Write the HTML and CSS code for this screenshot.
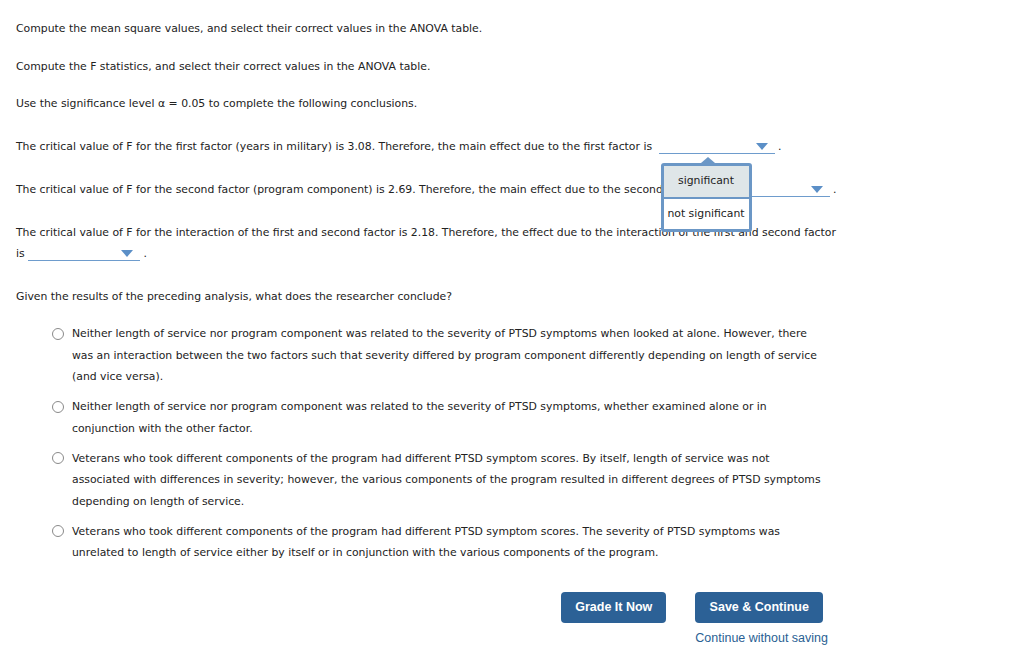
FILE: index.html
```html
<!DOCTYPE html>
<html>
<head>
<meta charset="utf-8">
<link rel="stylesheet" href="styles.css">
</head>
<body>
<div class="page">
  <p class="line first">Compute the mean square values, and select their correct values in the ANOVA table.</p>
  <p class="line g16">Compute the F statistics, and select their correct values in the ANOVA table.</p>
  <p class="line g16">Use the significance level α = 0.05 to complete the following conclusions.</p>
  <p class="line g22">The critical value of F for the first factor (years in military) is 3.08. Therefore, the main effect due to the first factor is <span class="dd w116 shift"><span class="arrow"></span><span class="menu"><span class="item sel">significant</span><span class="item">not significant</span></span></span> .</p>
  <p class="line g22">The critical value of F for the second factor (program component) is 2.69. Therefore, the main effect due to the second factor is <span class="dd w116"><span class="arrow"></span></span> .</p>
  <p class="line g22">The critical value of F for the interaction of the first and second factor is 2.18. Therefore, the effect due to the interaction of the first and second factor<br>is <span class="dd w112"><span class="arrow"></span></span> .</p>
  <p class="line g22">Given the results of the preceding analysis, what does the researcher conclude?</p>
  <div class="options">
    <label class="opt"><span class="radio"></span><span class="otext">Neither length of service nor program component was related to the severity of PTSD symptoms when looked at alone. However, there<br>was an interaction between the two factors such that severity differed by program component differently depending on length of service<br>(and vice versa).</span></label>
    <label class="opt"><span class="radio"></span><span class="otext">Neither length of service nor program component was related to the severity of PTSD symptoms, whether examined alone or in<br>conjunction with the other factor.</span></label>
    <label class="opt"><span class="radio"></span><span class="otext">Veterans who took different components of the program had different PTSD symptom scores. By itself, length of service was not<br>associated with differences in severity; however, the various components of the program resulted in different degrees of PTSD symptoms<br>depending on length of service.</span></label>
    <label class="opt"><span class="radio"></span><span class="otext">Veterans who took different components of the program had different PTSD symptom scores. The severity of PTSD symptoms was<br>unrelated to length of service either by itself or in conjunction with the various components of the program.</span></label>
  </div>
  <div class="actions">
    <button class="btn grade">Grade It Now</button>
    <div class="savecol">
      <button class="btn save">Save &amp; Continue</button>
      <a class="link">Continue without saving</a>
    </div>
  </div>
</div>
</body>
</html>
```

FILE: styles.css
```css
html, body {
  margin: 0;
  padding: 0;
  background: #fff;
}
.page {
  width: 812px;
  padding: 0 0 0 16px;
  font-family: "DejaVu Sans", Verdana, sans-serif;
  font-size: 10.85px;
  color: #222;
}
.line {
  margin: 0;
  line-height: 21px;
  white-space: nowrap;
}
.first { padding-top: 18px; }
.g16 { margin-top: 16.5px; }
.g22 { margin-top: 22px; }
.dd {
  position: relative;
  display: inline-block;
  height: 14px;
  vertical-align: -4px;
  border-bottom: 1px solid #6e9ccd;
}
.shift { margin-left: 3px; }
.w116 { width: 116px; }
.w112 { width: 112px; }
.arrow {
  position: absolute;
  right: 7px;
  top: 4px;
  width: 0;
  height: 0;
  border-left: 6px solid transparent;
  border-right: 6px solid transparent;
  border-top: 7px solid #5b8fc7;
}
.menu {
  position: absolute;
  left: 2px;
  top: 24px;
  width: 85px;
  border: 3px solid #6b97c6;
  border-radius: 3px;
  background: #fff;
  display: flex;
  flex-direction: column;
  z-index: 5;
}
.menu::before {
  content: "";
  position: absolute;
  left: 37px;
  top: -9px;
  border-left: 7px solid transparent;
  border-right: 7px solid transparent;
  border-bottom: 6px solid #6b97c6;
}
.item {
  display: block;
  text-align: center;
  height: 30px;
  line-height: 30px;
  color: #222;
}
.item.sel {
  background: #dfe6e8;
  border-bottom: 2px solid #6b97c6;
  height: 31px;
}
.options {
  margin-top: 16px;
  padding-left: 36px;
}
.opt {
  display: flex;
  align-items: flex-start;
  line-height: 21.5px;
  margin-bottom: 8.5px;
  white-space: nowrap;
}
.radio {
  flex: none;
  width: 10px;
  height: 10px;
  border: 1.3px solid #8a8a8a;
  border-radius: 50%;
  margin: 4.5px 8px 0 0;
  background: #fff;
}
.otext { display: block; }
.actions {
  display: flex;
  justify-content: flex-end;
  gap: 29px;
  margin-top: 28px;
}
.btn {
  font-family: "Liberation Sans", Arial, sans-serif;
  font-weight: bold;
  font-size: 12.5px;
  color: #fff;
  background: #2c6196;
  border: none;
  border-radius: 4px;
  height: 31px;
  padding: 0;
  cursor: pointer;
}
.grade { width: 105px; }
.save { width: 128px; }
.savecol {
  display: flex;
  flex-direction: column;
  align-items: flex-start;
}
.link {
  font-family: "Liberation Sans", Arial, sans-serif;
  font-size: 12.5px;
  color: #2a5f93;
  margin-top: 8px;
}
```
